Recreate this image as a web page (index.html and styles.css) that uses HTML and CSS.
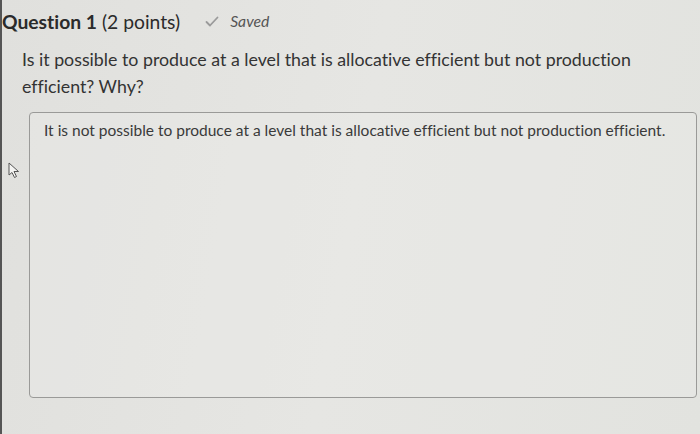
FILE: index.html
```html
<!DOCTYPE html>
<html>
<head>
<meta charset="utf-8">
<link rel="stylesheet" href="styles.css">
</head>
<body>
<div class="page">
  <div class="header">
    <span class="title"><b>Question 1</b> (2 points)</span>
    <span class="saved">
      <svg class="check" width="14" height="11" viewBox="0 0 14 11"><path d="M1.5 6 L5 9.5 L12.5 1.5" fill="none" stroke="#9a9a9a" stroke-width="1.8" stroke-linecap="round" stroke-linejoin="round"/></svg>
      <i>Saved</i>
    </span>
  </div>
  <p class="question">Is it possible to produce at a level that is allocative efficient but not production efficient? Why?</p>
  <div class="answer-row">
    <div class="gutter">
      <svg class="cursor" width="13" height="17" viewBox="0 0 13 17"><path d="M1 1 L1 13 L4 10.5 L6.5 15.5 L8.5 14.5 L6 9.5 L10.5 9.5 Z" fill="#f4f4f2" stroke="#555" stroke-width="1" stroke-linejoin="round"/></svg>
    </div>
    <div class="answer">It is not possible to produce at a level that is allocative efficient but not production efficient.</div>
  </div>
</div>
</body>
</html>
```
FILE: styles.css
```css
html, body {
  margin: 0;
  padding: 0;
  background: #e2e2df;
}
.page {
  width: 700px;
  height: 434px;
  box-sizing: border-box;
  border-left: 2px solid #555;
  background: linear-gradient(100deg, #e0e0dd 0%, #e6e6e3 50%, #e2e3df 100%);
  font-family: Lato, "Open Sans", sans-serif;
  font-variant-ligatures: none;
  color: #333;
  overflow: hidden;
}
.header {
  display: flex;
  align-items: center;
  gap: 25px;
  padding: 9px 0 0 0;
  height: 24px;
}
.title {
  font-size: 19.3px;
  color: #2b2b2b;
}
.title b {
  font-weight: 700;
}
.saved {
  display: flex;
  align-items: center;
  gap: 11px;
  font-size: 15.7px;
  color: #555;
}
.question {
  margin: 13px 30px 0 20px;
  font-size: 17.8px;
  line-height: 27px;
  color: #333;
}
.answer-row {
  display: flex;
  margin-top: 12px;
}
.gutter {
  width: 27px;
  flex: none;
  padding: 50px 0 0 6px;
  box-sizing: border-box;
}
.answer {
  width: 668px;
  height: 286px;
  box-sizing: border-box;
  border: 1px solid #9a9a98;
  border-radius: 4px;
  padding: 8px 10px 0 14px;
  font-size: 15.5px;
  color: #3a3a3a;
  background: rgba(235,235,232,0.4);
}
```
